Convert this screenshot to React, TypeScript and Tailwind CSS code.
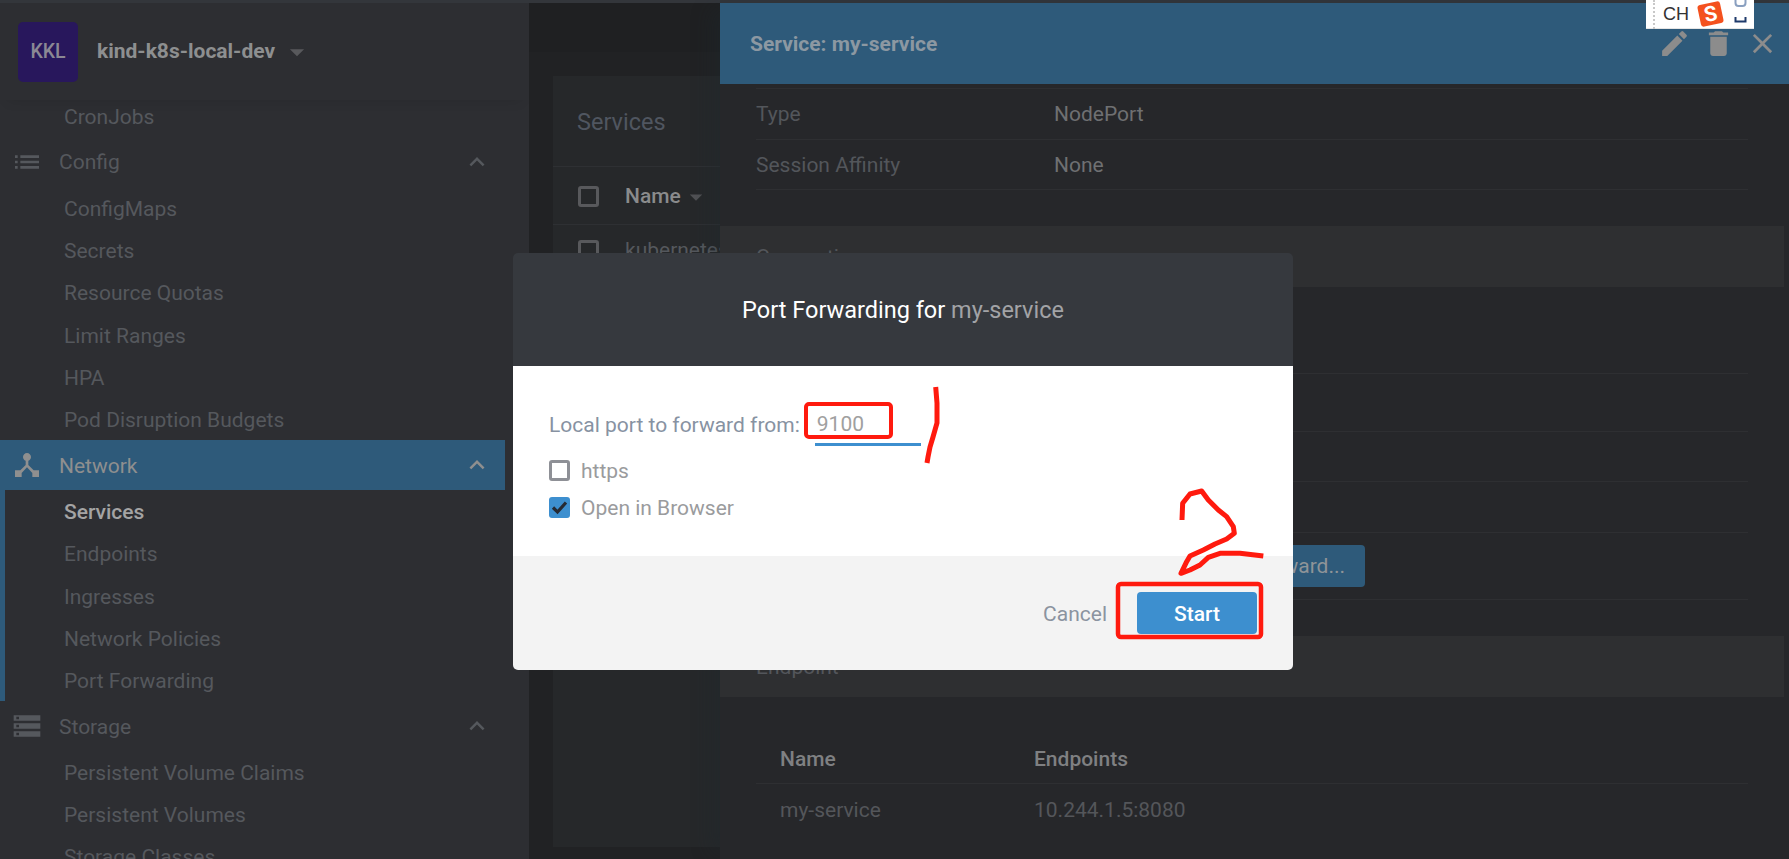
import React from "react";
import { MdDeviceHub, MdEdit, MdDelete, MdClose, MdList, MdStorage, MdExpandLess, MdArrowDropDown } from "react-icons/md";

function Group({ icon, label, active, children }: { icon: React.ReactNode; label: string; active?: boolean; children: React.ReactNode }) {
  return (
    <div>
      <div className={"flex h-[50px] w-[505px] items-center pl-[11px] pr-[13px] " + (active ? "bg-[#2e5a7a] text-[#8f8f8f]" : "text-[#55585d]")}>
        <span className="flex w-[32px] justify-center">{icon}</span>
        <span className="ml-[16px] flex-1 pt-[2px] text-[21px]">{label}</span>
        <MdExpandLess size={30} />
      </div>
      <div className={active ? "border-l-[5px] border-[#2e5a7a] [&>*]:-ml-[5px]" : ""}>{children}</div>
    </div>
  );
}

function Sub({ label, active }: { label: string; active?: boolean }) {
  return (
    <div className={"flex h-[42.2px] items-center pl-[64px] pt-[3px] text-[21px] " + (active ? "font-medium text-[#a4a4a4]" : "text-[#55585d]")}>{label}</div>
  );
}

function Row({ label, value }: { label: string; value: string }) {
  return (
    <div className="flex h-[50.5px] items-center border-b border-[#2e2f32] pt-[2px] text-[21px]">
      <span className="w-[298px] text-[#53565b]">{label}</span>
      <span className="text-[#6f7072]">{value}</span>
    </div>
  );
}

function Section({ label }: { label: string }) {
  return <div className="flex h-[61px] w-[1064px] items-center bg-[#2e2f31] pl-[36px] pt-[2px] text-[21px] text-[#53565b]">{label}</div>;
}

export default function App() {
  return (
    <div className="relative flex h-[859px] w-[1789px] flex-col overflow-hidden bg-[#212224] [font-family:Roboto,sans-serif]">
      <div className="h-[3px] shrink-0 bg-[#33363b]" />
      <div className="flex min-h-0 flex-1">
        {/* Sidebar */}
        <aside className="flex w-[529px] shrink-0 flex-col overflow-hidden bg-[#2d2e32]">
          <div className="relative z-10 flex h-[97px] shrink-0 items-center bg-[#2d2e32] pl-[18px] shadow-[0_8px_12px_-8px_rgba(0,0,0,0.12)]">
            <div className="flex h-[60px] w-[60px] items-center justify-center rounded-[5px] bg-[#28175c] text-[19.5px] font-medium text-[#8b8894]">KKL</div>
            <span className="ml-[19px] text-[21px] font-bold text-[#8d8f90]">kind-k8s-local-dev</span>
            <MdArrowDropDown size={34} className="ml-[5px] text-[#58595c]" />
          </div>
          <div className="-mt-[5px]">
            <Sub label="CronJobs" />
            <Group icon={<MdList size={32} />} label="Config">
              <Sub label="ConfigMaps" />
              <Sub label="Secrets" />
              <Sub label="Resource Quotas" />
              <Sub label="Limit Ranges" />
              <Sub label="HPA" />
              <Sub label="Pod Disruption Budgets" />
            </Group>
            <Group icon={<MdDeviceHub size={32} />} label="Network" active>
              <Sub label="Services" active />
              <Sub label="Endpoints" />
              <Sub label="Ingresses" />
              <Sub label="Network Policies" />
              <Sub label="Port Forwarding" />
            </Group>
            <Group icon={<MdStorage size={32} />} label="Storage">
              <Sub label="Persistent Volume Claims" />
              <Sub label="Persistent Volumes" />
              <Sub label="Storage Classes" />
            </Group>
          </div>
        </aside>

        {/* Main content */}
        <main className="flex min-w-0 flex-1 flex-col">
          <div className="h-[49px] shrink-0 bg-[#1f2022]" />
          <div className="ml-[24px] mt-[24px] h-[771px] bg-[#26282a]">
            <div className="flex h-[91px] items-center border-b border-[#2e3033] pl-[24px] pt-[4px] text-[23.5px] text-[#505660]">Services</div>
            <div className="flex h-[58px] items-center border-b border-[#2e3033] pl-[25px] pt-[2px]">
              <span className="h-[21px] w-[21px] rounded-[3px] border-[3px] border-[#58595c]" />
              <span className="ml-[26px] text-[21px] font-medium text-[#8a8b8c]">Name</span>
              <MdArrowDropDown size={30} className="text-[#505154]" />
            </div>
            <div className="flex h-[50px] items-center pl-[25px]">
              <span className="h-[21px] w-[21px] rounded-[3px] border-[3px] border-[#58595c]" />
              <span className="ml-[26px] pt-[2px] text-[21px] text-[#55585d]">kubernetes</span>
            </div>
          </div>
        </main>
      </div>

      {/* Slide-over detail panel */}
      <section className="absolute bottom-0 left-[720px] right-0 top-[3px] bg-[#26272a] shadow-[-14px_0_18px_-6px_rgba(30,40,45,0.35)]">
        <header className="flex h-[81px] items-center bg-[#2e5a7a] pl-[30px] pr-[10px]">
          <span className="flex-1 pt-[2px] text-[21px] font-bold text-[#8c98a2]">Service: my-service</span>
          <div className="flex gap-[11px] text-[#8c8c8c]">
            <MdEdit size={33} />
            <MdDelete size={33} />
            <MdClose size={33} />
          </div>
        </header>
        <div className="ml-[36px] mt-[4px] w-[992px] border-t border-[#2e2f32]">
          <Row label="Type" value="NodePort" />
          <Row label="Session Affinity" value="None" />
        </div>
        <div className="mt-[36px]">
          <Section label="Connection" />
        </div>
        <div className="ml-[36px] w-[992px]">
          <div className="h-[87px] border-b border-[#2e2f32]" />
          <div className="h-[58px] border-b border-[#2e2f32]" />
          <div className="h-[50px] border-b border-[#2e2f32]" />
          <div className="h-[51px] border-b border-[#2e2f32]" />
          <div className="flex h-[67px] items-center border-b border-[#2e2f32]">
            <span className="ml-[431px] rounded-[4px] bg-[#2e5a7a] px-[20px] py-[10px] text-[21px] leading-[22px] text-[#8f9498]">Port Forward...</span>
          </div>
        </div>
        <div className="mt-[36px]">
          <Section label="Endpoint" />
        </div>
        <div className="ml-[36px] mt-[36px] w-[992px] text-[21px]">
          <div className="flex h-[51px] items-center border-b border-[#2e2f32] pl-[24px] pt-[3px] font-medium text-[#7f8082]">
            <span className="w-[254px]">Name</span>
            <span>Endpoints</span>
          </div>
          <div className="flex h-[50px] items-center pl-[24px] pt-[3px] text-[#54565a]">
            <span className="w-[254px]">my-service</span>
            <span>10.244.1.5:8080</span>
          </div>
        </div>
      </section>

      {/* Dialog */}
      <div className="absolute left-[513px] top-[253px] flex h-[417px] w-[780px] flex-col overflow-hidden rounded-[5px]">
        <div className="flex h-[113px] shrink-0 items-center justify-center bg-[#36393e] pt-[2px] text-[23.5px] text-white">
          Port Forwarding for&nbsp;<span className="text-[#a2a3a6]">my-service</span>
        </div>
        <div className="h-[190px] shrink-0 bg-white pl-[36px] pt-[41px]">
          <div className="flex h-[39px] items-start text-[21px] leading-[32px]">
            <span className="pt-[2px] text-[#8792a2]">Local port to forward from:</span>
            <span className="ml-[15px] h-[39px] w-[106px] border-b-[3px] border-[#3d8fcf] pl-[2px] pt-[1px] text-[#a0a0a0]">9100</span>
          </div>
          <div className="mt-[14px] flex h-[21px] items-center">
            <span className="h-[21px] w-[21px] rounded-[3px] border-[3px] border-[#8e9096]" />
            <span className="ml-[11px] pt-[2px] text-[21px] text-[#9a9b9d]">https</span>
          </div>
          <div className="mt-[16px] flex h-[21px] items-center">
            <span className="flex h-[21px] w-[21px] items-center justify-center rounded-[3px] bg-[#3d8fcf]">
              <svg width="21" height="21" viewBox="0 0 21 21" fill="none">
                <polyline points="4,10.5 8.5,15 17,5.5" stroke="#262a33" strokeWidth="3.2" />
              </svg>
            </span>
            <span className="ml-[11px] pt-[2px] text-[21px] text-[#9a9b9d]">Open in Browser</span>
          </div>
        </div>
        <div className="flex flex-1 items-center justify-end gap-[30px] bg-[#f3f3f3] pr-[36px]">
          <span className="pt-[3px] text-[21px] text-[#8b93a0]">Cancel</span>
          <span className="flex h-[42px] w-[120px] items-center justify-center rounded-[4px] bg-[#3d8fcf] pt-[3px] text-[21px] font-medium text-white">Start</span>
        </div>
      </div>

      {/* Red hand annotations */}
      <svg className="pointer-events-none absolute left-0 top-0" width="1789" height="859" viewBox="0 0 1789 859" fill="none">
        <rect x="806" y="404" width="85" height="33" rx="3" stroke="#ff1a0e" strokeWidth="4" />
        <rect x="1118" y="584" width="143" height="53" rx="3" stroke="#ff1a0e" strokeWidth="4.5" />
        <polyline points="935.7,387 937,403 937,423 933,437 930,447 928,457 927,463" stroke="#ff1a0e" strokeWidth="5" />
        <g transform="translate(1100 470) scale(0.3333)">
          <polyline
            points="246,150 248,100 270,72 305,63 325,90 355,120 380,140 400,170 403,190 380,207 345,222 310,240 270,258 260,275 243,310 270,300 300,285 325,262 360,250 420,250 490,258"
            stroke="#ff1a0e"
            strokeWidth="15"
            strokeLinejoin="round"
          />
        </g>
      </svg>

      {/* IME toolbar */}
      <div className="absolute left-[1646px] top-0 flex h-[29px] w-[108px] items-center border-b border-[#e6e6e6] bg-white pl-[7px]">
        <span className="h-[29px] border-l-[2px] border-dotted border-[#c8c8c8]" />
        <span className="ml-[8px] text-[18px] leading-none text-[#333] [font-family:'Liberation_Sans',sans-serif]">CH</span>
        <span className="ml-[10px] flex h-[22px] w-[23px] -rotate-12 items-center justify-center rounded-[3px] bg-[#f4511e] text-[21px] font-bold leading-none text-white">S</span>
        <svg className="ml-[12px]" width="14" height="29" viewBox="0 0 14 29" fill="none">
          <rect x="1.5" y="-3" width="10" height="9" rx="3" stroke="#8aa0c0" strokeWidth="2" />
          <path d="M1.5 17v4.5h10V17" stroke="#1f3a6b" strokeWidth="2" />
        </svg>
      </div>
    </div>
  );
}
